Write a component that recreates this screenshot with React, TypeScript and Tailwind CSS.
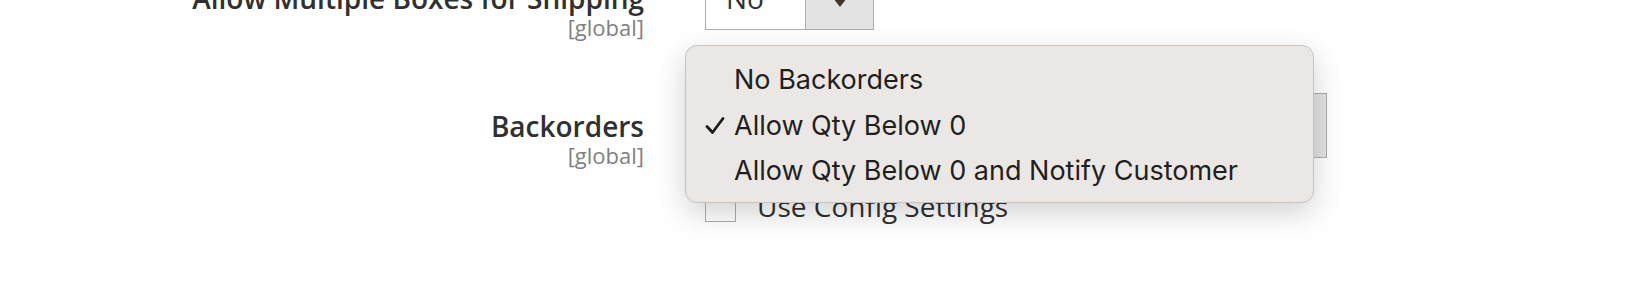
import React from 'react';

const options = ['No Backorders', 'Allow Qty Below 0', 'Allow Qty Below 0 and Notify Customer'];

function Check() {
  return (
    <svg width="20" height="18" viewBox="0 0 20 18" fill="none" className="shrink-0">
      <path d="M2 9.5 L7.5 15.5 L18 1.5" stroke="#1c1c1c" strokeWidth="2.8" strokeLinecap="round" strokeLinejoin="round" />
    </svg>
  );
}

function Row({ label, className, children }: { label: string; className?: string; children: React.ReactNode }) {
  return (
    <div className={`flex items-start ${className ?? ''}`}>
      <div className="w-[644px] shrink-0 pt-[17px] text-right">
        <div className="text-[28px] leading-[32px] font-semibold text-[#303030]">{label}</div>
        <div className="text-[22px] leading-[27px] text-[#808080]">[global]</div>
      </div>
      <div className="ml-[61px]">{children}</div>
    </div>
  );
}

export default function App() {
  return (
    <div className="relative h-[282px] w-[1648px] overflow-hidden bg-white font-['Open_Sans',sans-serif]">
      <div className="mt-[-35px] flex flex-col">
        <Row label="Allow Multiple Boxes for Shipping" className="h-[128px]">
          <div className="flex h-[65px] w-[169px] border border-[#adadad]">
            <div className="flex flex-1 items-center pl-[20px] text-[28px] text-[#303030]">No</div>
            <div className="flex w-[68px] justify-center border-l border-[#adadad] bg-[#e3e3e3] pt-[32px]">
              <svg width="16" height="10" viewBox="0 0 16 10">
                <path d="M1 0 L15 0 L8 9 Z" fill="#41362f" />
              </svg>
            </div>
          </div>
        </Row>
        <Row label="Backorders">
          <div className="flex h-[65px] w-[622px] border border-[#adadad]">
            <div className="flex-1 bg-white" />
            <div className="w-[68px] border-l border-[#adadad] bg-[#e3e3e3]" />
          </div>
          <label className="mt-[30px] flex items-center gap-[21px]">
            <span className="h-[31px] w-[31px] border border-[#adadad] bg-white" />
            <span className="text-[28px] leading-[36px] text-[#303030]">Use Config Settings</span>
          </label>
        </Row>
      </div>

      {/* native select menu */}
      <div className="absolute left-[685px] top-[45px] flex h-[158px] w-[629px] flex-col rounded-[12px] border border-[#c6c2bf] bg-[#ebe7e4] pt-[12px] pb-[8px] shadow-[0_10px_30px_rgba(0,0,0,0.18)] font-['Inter',sans-serif]">
        {options.map((o, i) => (
          <div key={o} className="flex h-[46px] items-center text-[27px] text-[#1f1f1f]">
            <div className="flex w-[48px] justify-end pr-[9px]">{i === 1 && <Check />}</div>
            <span>{o}</span>
          </div>
        ))}
      </div>
    </div>
  );
}
